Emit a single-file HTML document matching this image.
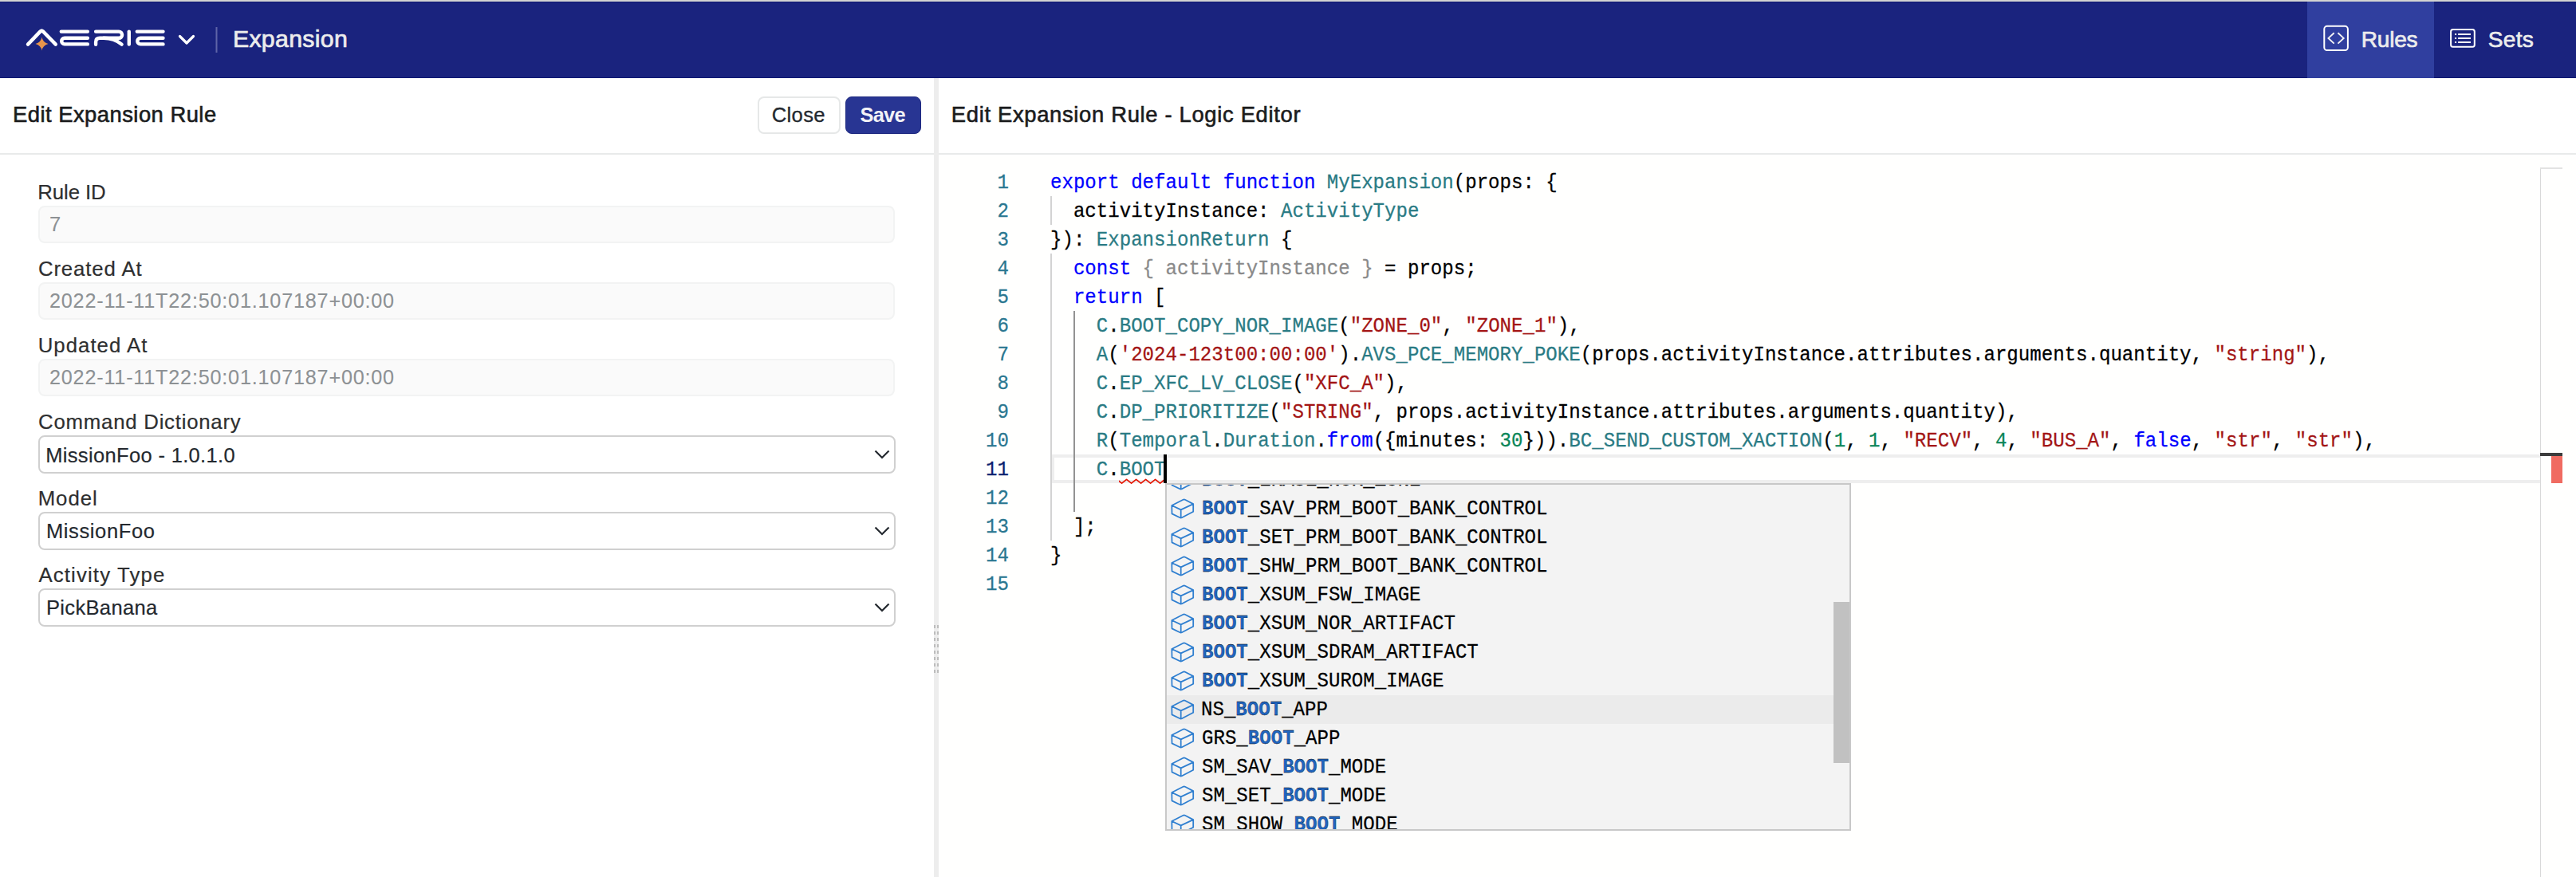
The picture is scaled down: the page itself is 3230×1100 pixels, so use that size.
<!DOCTYPE html>
<html><head><meta charset="utf-8">
<style>
*{box-sizing:border-box;margin:0;padding:0}
html,body{width:3230px;height:1100px;overflow:hidden;background:#fff;position:relative;font-family:"Liberation Sans",sans-serif}
.a{position:absolute}
.t{position:absolute;white-space:pre;line-height:1}
.mono{position:absolute;font-family:"Liberation Mono",monospace;font-size:24.08px;white-space:pre}
</style></head><body>

<div class="a" style="left:0;top:0;width:3230px;height:2px;background:#d3d4d2"></div>
<div class="a" style="left:0;top:2px;width:3230px;height:96px;background:#1a237e"></div>
<div class="a" style="left:0;top:2px;width:3230px;height:1px;background:#0f1872"></div>
<div class="a" style="left:0;top:97px;width:3230px;height:1px;background:#0f1872"></div>
<div class="a" style="left:2893px;top:2px;width:159px;height:96px;background:#303f9f"></div>
<svg class="a" style="left:0;top:0" width="300" height="98" viewBox="0 0 300 98">
  <g fill="none" stroke="#fff" stroke-width="4.4" stroke-linecap="round" stroke-linejoin="round">
    <path d="M35 55.6 L50.6 39.4 Q52.3 37.7 54 39.4 L69.8 55.6"/>
    <path d="M76.8 39.6 H109.9 M109.9 47.8 H81 A3.8 3.8 0 0 0 81 55.4 H109.9"/>
    <path d="M120.1 39.6 H149 A4.1 4.1 0 0 1 149 47.8 H125 Q120.1 47.8 120.1 52.7 V55.8"/>
    <path d="M130 47.8 Q143 47.8 152.6 55.6"/>
    <path d="M161.8 39.6 V55.6"/>
    <path d="M171.8 39.6 H204.5 M204.5 47.8 H176.1 A3.8 3.8 0 0 0 176.1 55.4 H204.5"/>
  </g>
  <path fill="#e8954b" d="M52.5 46.5 Q53.5 53 60.5 55 Q53.5 57 52.5 63.5 Q51.5 57 44.5 55 Q51.5 53 52.5 46.5Z"/>
  <path d="M225.5 45.5 L234 54 L242.5 45.5" fill="none" stroke="#fff" stroke-width="3.2" stroke-linecap="round" stroke-linejoin="round"/>
  <rect x="270.5" y="34" width="2" height="32" fill="#5e64a8"/>
</svg>
<div class="t" style="left:291.9px;top:34.0px;font-size:30.3px;font-weight:400;letter-spacing:0.31px;color:#ececec;-webkit-text-stroke:0.7px #ececec;">Expansion</div>
<svg class="a" style="left:2900px;top:20px" width="60" height="60" viewBox="0 0 60 60">
  <rect x="14.3" y="12.8" width="29.6" height="30.25" rx="3.6" fill="none" stroke="#fff" stroke-width="2"/>
  <path d="M26.7 21.2 L19.5 27.9 L26.7 34.6 M31.5 21.2 L38.7 27.9 L31.5 34.6" fill="none" stroke="#f4f4f4" stroke-width="1.9"/>
</svg>
<div class="t" style="left:2960.8px;top:36.0px;font-size:28.1px;font-weight:400;letter-spacing:-0.26px;color:#ececec;-webkit-text-stroke:0.7px #ececec;">Rules</div>
<svg class="a" style="left:3060px;top:20px" width="60" height="60" viewBox="0 0 60 60">
  <rect x="13.1" y="17.1" width="29.7" height="21.7" rx="2.6" fill="none" stroke="#fff" stroke-width="2"/>
  <path d="M22.1 23 H38 M22.1 28 H38 M22.1 32.9 H38" fill="none" stroke="#f6f6f6" stroke-width="2"/>
  <path d="M18 22 h2.1 v2.1 h-2.1Z M18 27 h2.1 v2.1 h-2.1Z M18 31.9 h2.1 v2.1 h-2.1Z" fill="#eee"/>
</svg>
<div class="t" style="left:3119.7px;top:36.3px;font-size:28.1px;font-weight:400;letter-spacing:0.33px;color:#ececec;-webkit-text-stroke:0.7px #ececec;">Sets</div>
<div class="t" style="left:16.0px;top:130.4px;font-size:27.4px;font-weight:400;letter-spacing:0.47px;color:#1b1c1d;-webkit-text-stroke:0.6px #1b1c1d;">Edit Expansion Rule</div>
<div class="a" style="left:950px;top:121px;width:104px;height:47px;border:2px solid #e6e8e8;border-radius:8px;background:#fff"></div>
<div class="t" style="left:967.7px;top:132.0px;font-size:25.6px;font-weight:400;letter-spacing:0.35px;color:#24292f;-webkit-text-stroke:0.35px #24292f;">Close</div>
<div class="a" style="left:1060px;top:121px;width:95px;height:47px;border-radius:8px;background:#283593;border:1px solid #1f2a80"></div>
<div class="t" style="left:1078.4px;top:132.2px;font-size:25.4px;font-weight:700;letter-spacing:-0.7px;color:#f2f2f6;">Save</div>
<div class="a" style="left:0;top:192px;width:3230px;height:2px;background:#e8eaea"></div>
<div class="t" style="left:47.3px;top:229.3px;font-size:25.8px;font-weight:400;letter-spacing:-0.12px;color:#2e2f30;-webkit-text-stroke:0.2px #2e2f30;">Rule ID</div>
<div class="a" style="left:48px;top:258px;width:1074px;height:47px;border:2px solid #f2f3f3;background:#fafafa;border-radius:8px"></div>
<div class="t" style="left:62.0px;top:269.1px;font-size:25.6px;font-weight:400;letter-spacing:0px;color:#8d9194;-webkit-text-stroke:0.1px #8d9194;">7</div>
<div class="t" style="left:47.9px;top:325.3px;font-size:25.8px;font-weight:400;letter-spacing:0.88px;color:#2e2f30;-webkit-text-stroke:0.2px #2e2f30;">Created At</div>
<div class="a" style="left:48px;top:354px;width:1074px;height:47px;border:2px solid #f2f3f3;background:#fafafa;border-radius:8px"></div>
<div class="t" style="left:62.0px;top:364.7px;font-size:25.2px;font-weight:400;letter-spacing:0.8px;color:#8d9194;-webkit-text-stroke:0.1px #8d9194;">2022-11-11T22:50:01.107187+00:00</div>
<div class="t" style="left:47.7px;top:421.3px;font-size:25.8px;font-weight:400;letter-spacing:1.01px;color:#2e2f30;-webkit-text-stroke:0.2px #2e2f30;">Updated At</div>
<div class="a" style="left:48px;top:450px;width:1074px;height:47px;border:2px solid #f2f3f3;background:#fafafa;border-radius:8px"></div>
<div class="t" style="left:62.0px;top:460.7px;font-size:25.2px;font-weight:400;letter-spacing:0.8px;color:#8d9194;-webkit-text-stroke:0.1px #8d9194;">2022-11-11T22:50:01.107187+00:00</div>
<div class="t" style="left:48.1px;top:517.2px;font-size:25.8px;font-weight:400;letter-spacing:0.75px;color:#2e2f30;-webkit-text-stroke:0.2px #2e2f30;">Command Dictionary</div>
<div class="a" style="left:48px;top:546px;width:1075px;height:48px;border:2px solid #d0d0d0;background:#fff;border-radius:8px"></div>
<div class="t" style="left:57.2px;top:558.5px;font-size:25.5px;font-weight:400;letter-spacing:0.34px;color:#24292f;-webkit-text-stroke:0.2px #24292f;">MissionFoo - 1.0.1.0</div>
<svg class="a" style="left:1090px;top:556px" width="32" height="28"><path d="M7.5 9.5 L16 18 L24.5 9.5" fill="none" stroke="#24292f" stroke-width="2.2"/></svg>
<div class="t" style="left:47.7px;top:613.3px;font-size:25.8px;font-weight:400;letter-spacing:0.93px;color:#2e2f30;-webkit-text-stroke:0.2px #2e2f30;">Model</div>
<div class="a" style="left:48px;top:642px;width:1075px;height:48px;border:2px solid #d0d0d0;background:#fff;border-radius:8px"></div>
<div class="t" style="left:57.9px;top:654.4px;font-size:25.5px;font-weight:400;letter-spacing:0.63px;color:#24292f;-webkit-text-stroke:0.2px #24292f;">MissionFoo</div>
<svg class="a" style="left:1090px;top:652px" width="32" height="28"><path d="M7.5 9.5 L16 18 L24.5 9.5" fill="none" stroke="#24292f" stroke-width="2.2"/></svg>
<div class="t" style="left:48.4px;top:709.3px;font-size:25.8px;font-weight:400;letter-spacing:1.14px;color:#2e2f30;-webkit-text-stroke:0.2px #2e2f30;">Activity Type</div>
<div class="a" style="left:48px;top:738px;width:1075px;height:48px;border:2px solid #d0d0d0;background:#fff;border-radius:8px"></div>
<div class="t" style="left:57.9px;top:750.4px;font-size:25.5px;font-weight:400;letter-spacing:0.36px;color:#24292f;-webkit-text-stroke:0.2px #24292f;">PickBanana</div>
<svg class="a" style="left:1090px;top:748px" width="32" height="28"><path d="M7.5 9.5 L16 18 L24.5 9.5" fill="none" stroke="#24292f" stroke-width="2.2"/></svg>
<div class="a" style="left:1171px;top:98px;width:6px;height:1002px;background:#ededed"></div>
<svg class="a" style="left:1171px;top:784px" width="6" height="62" fill="#bdbdbd"><rect x="0" y="0" width="2" height="4"/><rect x="4" y="0" width="2" height="4"/><rect x="0" y="8" width="2" height="4"/><rect x="4" y="8" width="2" height="4"/><rect x="0" y="16" width="2" height="4"/><rect x="4" y="16" width="2" height="4"/><rect x="0" y="24" width="2" height="4"/><rect x="4" y="24" width="2" height="4"/><rect x="0" y="32" width="2" height="4"/><rect x="4" y="32" width="2" height="4"/><rect x="0" y="40" width="2" height="4"/><rect x="4" y="40" width="2" height="4"/><rect x="0" y="48" width="2" height="4"/><rect x="4" y="48" width="2" height="4"/><rect x="0" y="56" width="2" height="4"/><rect x="4" y="56" width="2" height="4"/></svg>
<div class="a" style="left:1177px;top:194px;width:2053px;height:906px;background:#fffffe"></div>
<div class="a" style="left:1177px;top:98px;width:2053px;height:94px;background:#fff"></div>
<div class="t" style="left:1192.8px;top:130.4px;font-size:27.4px;font-weight:400;letter-spacing:0.67px;color:#1b1c1d;-webkit-text-stroke:0.6px #1b1c1d;">Edit Expansion Rule - Logic Editor</div>
<div class="a" style="left:1318px;top:570px;width:1867px;height:36px;border:4px solid #eeeeee;border-right:none"></div>
<div class="a" style="left:1317.0px;top:246px;width:2px;height:36px;background:#d3d3d3"></div>
<div class="a" style="left:1317.0px;top:318px;width:2px;height:360px;background:#d3d3d3"></div>
<div class="a" style="left:1345.9px;top:390px;width:2px;height:252px;background:#939393"></div>
<div class="a mono" style="left:1193px;top:212px;width:72px;text-align:right;line-height:36px;color:#2a7791;transform:scaleY(1.08);transform-origin:0 26px;-webkit-text-stroke:0.25px #2a7791">1</div>
<div class="a mono" style="left:1193px;top:248px;width:72px;text-align:right;line-height:36px;color:#2a7791;transform:scaleY(1.08);transform-origin:0 26px;-webkit-text-stroke:0.25px #2a7791">2</div>
<div class="a mono" style="left:1193px;top:284px;width:72px;text-align:right;line-height:36px;color:#2a7791;transform:scaleY(1.08);transform-origin:0 26px;-webkit-text-stroke:0.25px #2a7791">3</div>
<div class="a mono" style="left:1193px;top:320px;width:72px;text-align:right;line-height:36px;color:#2a7791;transform:scaleY(1.08);transform-origin:0 26px;-webkit-text-stroke:0.25px #2a7791">4</div>
<div class="a mono" style="left:1193px;top:356px;width:72px;text-align:right;line-height:36px;color:#2a7791;transform:scaleY(1.08);transform-origin:0 26px;-webkit-text-stroke:0.25px #2a7791">5</div>
<div class="a mono" style="left:1193px;top:392px;width:72px;text-align:right;line-height:36px;color:#2a7791;transform:scaleY(1.08);transform-origin:0 26px;-webkit-text-stroke:0.25px #2a7791">6</div>
<div class="a mono" style="left:1193px;top:428px;width:72px;text-align:right;line-height:36px;color:#2a7791;transform:scaleY(1.08);transform-origin:0 26px;-webkit-text-stroke:0.25px #2a7791">7</div>
<div class="a mono" style="left:1193px;top:464px;width:72px;text-align:right;line-height:36px;color:#2a7791;transform:scaleY(1.08);transform-origin:0 26px;-webkit-text-stroke:0.25px #2a7791">8</div>
<div class="a mono" style="left:1193px;top:500px;width:72px;text-align:right;line-height:36px;color:#2a7791;transform:scaleY(1.08);transform-origin:0 26px;-webkit-text-stroke:0.25px #2a7791">9</div>
<div class="a mono" style="left:1193px;top:536px;width:72px;text-align:right;line-height:36px;color:#2a7791;transform:scaleY(1.08);transform-origin:0 26px;-webkit-text-stroke:0.25px #2a7791">10</div>
<div class="a mono" style="left:1193px;top:572px;width:72px;text-align:right;line-height:36px;color:#0b216f;transform:scaleY(1.08);transform-origin:0 26px;-webkit-text-stroke:0.25px #0b216f">11</div>
<div class="a mono" style="left:1193px;top:608px;width:72px;text-align:right;line-height:36px;color:#2a7791;transform:scaleY(1.08);transform-origin:0 26px;-webkit-text-stroke:0.25px #2a7791">12</div>
<div class="a mono" style="left:1193px;top:644px;width:72px;text-align:right;line-height:36px;color:#2a7791;transform:scaleY(1.08);transform-origin:0 26px;-webkit-text-stroke:0.25px #2a7791">13</div>
<div class="a mono" style="left:1193px;top:680px;width:72px;text-align:right;line-height:36px;color:#2a7791;transform:scaleY(1.08);transform-origin:0 26px;-webkit-text-stroke:0.25px #2a7791">14</div>
<div class="a mono" style="left:1193px;top:716px;width:72px;text-align:right;line-height:36px;color:#2a7791;transform:scaleY(1.08);transform-origin:0 26px;-webkit-text-stroke:0.25px #2a7791">15</div>
<div class="a mono" style="left:1317px;top:212px;line-height:36px;transform:scaleY(1.08);transform-origin:0 26px;-webkit-text-stroke:0.25px currentColor"><span style="color:#0000ff">export default function </span><span style="color:#2a7b84">MyExpansion</span><span style="color:#000000">(props: {</span></div>
<div class="a mono" style="left:1317px;top:248px;line-height:36px;transform:scaleY(1.08);transform-origin:0 26px;-webkit-text-stroke:0.25px currentColor"><span style="color:#000000">  activityInstance: </span><span style="color:#2a7b84">ActivityType</span></div>
<div class="a mono" style="left:1317px;top:284px;line-height:36px;transform:scaleY(1.08);transform-origin:0 26px;-webkit-text-stroke:0.25px currentColor"><span style="color:#000000">}): </span><span style="color:#2a7b84">ExpansionReturn</span><span style="color:#000000"> {</span></div>
<div class="a mono" style="left:1317px;top:320px;line-height:36px;transform:scaleY(1.08);transform-origin:0 26px;-webkit-text-stroke:0.25px currentColor"><span style="color:#000000">  </span><span style="color:#0000ff">const</span><span style="color:#8a8a8a"> { activityInstance }</span><span style="color:#000000"> = props;</span></div>
<div class="a mono" style="left:1317px;top:356px;line-height:36px;transform:scaleY(1.08);transform-origin:0 26px;-webkit-text-stroke:0.25px currentColor"><span style="color:#000000">  </span><span style="color:#0000ff">return</span><span style="color:#000000"> [</span></div>
<div class="a mono" style="left:1317px;top:392px;line-height:36px;transform:scaleY(1.08);transform-origin:0 26px;-webkit-text-stroke:0.25px currentColor"><span style="color:#000000">    </span><span style="color:#2a7b84">C</span><span style="color:#000000">.</span><span style="color:#2a7b84">BOOT_COPY_NOR_IMAGE</span><span style="color:#000000">(</span><span style="color:#a31515">&quot;ZONE_0&quot;</span><span style="color:#000000">, </span><span style="color:#a31515">&quot;ZONE_1&quot;</span><span style="color:#000000">),</span></div>
<div class="a mono" style="left:1317px;top:428px;line-height:36px;transform:scaleY(1.08);transform-origin:0 26px;-webkit-text-stroke:0.25px currentColor"><span style="color:#000000">    </span><span style="color:#2a7b84">A</span><span style="color:#000000">(</span><span style="color:#a31515">&#x27;2024-123t00:00:00&#x27;</span><span style="color:#000000">).</span><span style="color:#2a7b84">AVS_PCE_MEMORY_POKE</span><span style="color:#000000">(props.activityInstance.attributes.arguments.quantity, </span><span style="color:#a31515">&quot;string&quot;</span><span style="color:#000000">),</span></div>
<div class="a mono" style="left:1317px;top:464px;line-height:36px;transform:scaleY(1.08);transform-origin:0 26px;-webkit-text-stroke:0.25px currentColor"><span style="color:#000000">    </span><span style="color:#2a7b84">C</span><span style="color:#000000">.</span><span style="color:#2a7b84">EP_XFC_LV_CLOSE</span><span style="color:#000000">(</span><span style="color:#a31515">&quot;XFC_A&quot;</span><span style="color:#000000">),</span></div>
<div class="a mono" style="left:1317px;top:500px;line-height:36px;transform:scaleY(1.08);transform-origin:0 26px;-webkit-text-stroke:0.25px currentColor"><span style="color:#000000">    </span><span style="color:#2a7b84">C</span><span style="color:#000000">.</span><span style="color:#2a7b84">DP_PRIORITIZE</span><span style="color:#000000">(</span><span style="color:#a31515">&quot;STRING&quot;</span><span style="color:#000000">, props.activityInstance.attributes.arguments.quantity),</span></div>
<div class="a mono" style="left:1317px;top:536px;line-height:36px;transform:scaleY(1.08);transform-origin:0 26px;-webkit-text-stroke:0.25px currentColor"><span style="color:#000000">    </span><span style="color:#2a7b84">R</span><span style="color:#000000">(</span><span style="color:#2a7b84">Temporal</span><span style="color:#000000">.</span><span style="color:#2a7b84">Duration</span><span style="color:#000000">.</span><span style="color:#0000ff">from</span><span style="color:#000000">({minutes: </span><span style="color:#098658">30</span><span style="color:#000000">})).</span><span style="color:#2a7b84">BC_SEND_CUSTOM_XACTION</span><span style="color:#000000">(</span><span style="color:#098658">1</span><span style="color:#000000">, </span><span style="color:#098658">1</span><span style="color:#000000">, </span><span style="color:#a31515">&quot;RECV&quot;</span><span style="color:#000000">, </span><span style="color:#098658">4</span><span style="color:#000000">, </span><span style="color:#a31515">&quot;BUS_A&quot;</span><span style="color:#000000">, </span><span style="color:#0000ff">false</span><span style="color:#000000">, </span><span style="color:#a31515">&quot;str&quot;</span><span style="color:#000000">, </span><span style="color:#a31515">&quot;str&quot;</span><span style="color:#000000">),</span></div>
<div class="a mono" style="left:1317px;top:572px;line-height:36px;transform:scaleY(1.08);transform-origin:0 26px;-webkit-text-stroke:0.25px currentColor"><span style="color:#000000">    </span><span style="color:#2a7b84">C</span><span style="color:#000000">.</span><span style="color:#2a7b84">BOOT</span></div>
<div class="a mono" style="left:1317px;top:608px;line-height:36px;transform:scaleY(1.08);transform-origin:0 26px;-webkit-text-stroke:0.25px currentColor"><span style="color:#000000"></span></div>
<div class="a mono" style="left:1317px;top:644px;line-height:36px;transform:scaleY(1.08);transform-origin:0 26px;-webkit-text-stroke:0.25px currentColor"><span style="color:#000000">  ];</span></div>
<div class="a mono" style="left:1317px;top:680px;line-height:36px;transform:scaleY(1.08);transform-origin:0 26px;-webkit-text-stroke:0.25px currentColor"><span style="color:#000000">}</span></div>
<div class="a mono" style="left:1317px;top:716px;line-height:36px;transform:scaleY(1.08);transform-origin:0 26px;-webkit-text-stroke:0.25px currentColor"><span style="color:#000000"></span></div>
<div class="a" style="left:1403px;top:596px;width:56px;height:12px;overflow:hidden"><svg class="a" style="left:-3.4px;top:0.7px" width="70" height="12"><path d="M0.6 4.4 L6.6 9.2 L12.6 4.4 L18.6 9.2 L24.6 4.4 L30.6 9.2 L36.6 4.4 L42.6 9.2 L48.6 4.4 L54.6 9.2 L60.6 4.4" fill="none" stroke="#e51400" stroke-width="1.7" stroke-linejoin="round"/></svg></div>
<div class="a" style="left:1458.5px;top:570px;width:4px;height:36px;background:#000"></div>
<div class="a" style="left:3185px;top:210px;width:1px;height:890px;background:#d9d9d9"></div>
<div class="a" style="left:3185px;top:210px;width:28px;height:2px;background:#e3e3e3"></div>
<div class="a" style="left:3185px;top:568px;width:28px;height:4px;background:#3c3c3c"></div>
<div class="a" style="left:3199px;top:572px;width:14px;height:34px;background:#f06b61"></div>
<div class="a" style="left:1461px;top:606px;width:860px;height:436px;background:#f3f3f3;border:2px solid #c8c8c8;overflow:hidden"><div class="a" style="left:0;top:-24px;width:856px;height:36px;"><svg class="a" style="left:4px;top:2px" width="32" height="30" viewBox="0 0 32 30"><path d="M2.3 12 L16.5 4.8 Q17.7 4.2 18.9 4.8 L29.2 10.1 V19.7 L14.9 27.3 Q13.7 27.9 12.5 27.3 L2.5 22.4 Z M2.3 12 L13.7 17.4 L29.2 10.1 M13.7 17.4 V27.9" fill="none" stroke="#2f7fd0" stroke-width="1.75" stroke-linejoin="round"/></svg><div class="a mono" style="left:44px;top:1px;line-height:36px;color:#000;transform:scaleY(1.08);transform-origin:0 26px;-webkit-text-stroke:0.25px #000"><b style="color:#1f65c0">BOOT</b>_ERASE_NOR_ZONE</div></div><div class="a" style="left:0;top:12px;width:856px;height:36px;"><svg class="a" style="left:4px;top:2px" width="32" height="30" viewBox="0 0 32 30"><path d="M2.3 12 L16.5 4.8 Q17.7 4.2 18.9 4.8 L29.2 10.1 V19.7 L14.9 27.3 Q13.7 27.9 12.5 27.3 L2.5 22.4 Z M2.3 12 L13.7 17.4 L29.2 10.1 M13.7 17.4 V27.9" fill="none" stroke="#2f7fd0" stroke-width="1.75" stroke-linejoin="round"/></svg><div class="a mono" style="left:44px;top:1px;line-height:36px;color:#000;transform:scaleY(1.08);transform-origin:0 26px;-webkit-text-stroke:0.25px #000"><b style="color:#1f65c0">BOOT</b>_SAV_PRM_BOOT_BANK_CONTROL</div></div><div class="a" style="left:0;top:48px;width:856px;height:36px;"><svg class="a" style="left:4px;top:2px" width="32" height="30" viewBox="0 0 32 30"><path d="M2.3 12 L16.5 4.8 Q17.7 4.2 18.9 4.8 L29.2 10.1 V19.7 L14.9 27.3 Q13.7 27.9 12.5 27.3 L2.5 22.4 Z M2.3 12 L13.7 17.4 L29.2 10.1 M13.7 17.4 V27.9" fill="none" stroke="#2f7fd0" stroke-width="1.75" stroke-linejoin="round"/></svg><div class="a mono" style="left:44px;top:1px;line-height:36px;color:#000;transform:scaleY(1.08);transform-origin:0 26px;-webkit-text-stroke:0.25px #000"><b style="color:#1f65c0">BOOT</b>_SET_PRM_BOOT_BANK_CONTROL</div></div><div class="a" style="left:0;top:84px;width:856px;height:36px;"><svg class="a" style="left:4px;top:2px" width="32" height="30" viewBox="0 0 32 30"><path d="M2.3 12 L16.5 4.8 Q17.7 4.2 18.9 4.8 L29.2 10.1 V19.7 L14.9 27.3 Q13.7 27.9 12.5 27.3 L2.5 22.4 Z M2.3 12 L13.7 17.4 L29.2 10.1 M13.7 17.4 V27.9" fill="none" stroke="#2f7fd0" stroke-width="1.75" stroke-linejoin="round"/></svg><div class="a mono" style="left:44px;top:1px;line-height:36px;color:#000;transform:scaleY(1.08);transform-origin:0 26px;-webkit-text-stroke:0.25px #000"><b style="color:#1f65c0">BOOT</b>_SHW_PRM_BOOT_BANK_CONTROL</div></div><div class="a" style="left:0;top:120px;width:856px;height:36px;"><svg class="a" style="left:4px;top:2px" width="32" height="30" viewBox="0 0 32 30"><path d="M2.3 12 L16.5 4.8 Q17.7 4.2 18.9 4.8 L29.2 10.1 V19.7 L14.9 27.3 Q13.7 27.9 12.5 27.3 L2.5 22.4 Z M2.3 12 L13.7 17.4 L29.2 10.1 M13.7 17.4 V27.9" fill="none" stroke="#2f7fd0" stroke-width="1.75" stroke-linejoin="round"/></svg><div class="a mono" style="left:44px;top:1px;line-height:36px;color:#000;transform:scaleY(1.08);transform-origin:0 26px;-webkit-text-stroke:0.25px #000"><b style="color:#1f65c0">BOOT</b>_XSUM_FSW_IMAGE</div></div><div class="a" style="left:0;top:156px;width:856px;height:36px;"><svg class="a" style="left:4px;top:2px" width="32" height="30" viewBox="0 0 32 30"><path d="M2.3 12 L16.5 4.8 Q17.7 4.2 18.9 4.8 L29.2 10.1 V19.7 L14.9 27.3 Q13.7 27.9 12.5 27.3 L2.5 22.4 Z M2.3 12 L13.7 17.4 L29.2 10.1 M13.7 17.4 V27.9" fill="none" stroke="#2f7fd0" stroke-width="1.75" stroke-linejoin="round"/></svg><div class="a mono" style="left:44px;top:1px;line-height:36px;color:#000;transform:scaleY(1.08);transform-origin:0 26px;-webkit-text-stroke:0.25px #000"><b style="color:#1f65c0">BOOT</b>_XSUM_NOR_ARTIFACT</div></div><div class="a" style="left:0;top:192px;width:856px;height:36px;"><svg class="a" style="left:4px;top:2px" width="32" height="30" viewBox="0 0 32 30"><path d="M2.3 12 L16.5 4.8 Q17.7 4.2 18.9 4.8 L29.2 10.1 V19.7 L14.9 27.3 Q13.7 27.9 12.5 27.3 L2.5 22.4 Z M2.3 12 L13.7 17.4 L29.2 10.1 M13.7 17.4 V27.9" fill="none" stroke="#2f7fd0" stroke-width="1.75" stroke-linejoin="round"/></svg><div class="a mono" style="left:44px;top:1px;line-height:36px;color:#000;transform:scaleY(1.08);transform-origin:0 26px;-webkit-text-stroke:0.25px #000"><b style="color:#1f65c0">BOOT</b>_XSUM_SDRAM_ARTIFACT</div></div><div class="a" style="left:0;top:228px;width:856px;height:36px;"><svg class="a" style="left:4px;top:2px" width="32" height="30" viewBox="0 0 32 30"><path d="M2.3 12 L16.5 4.8 Q17.7 4.2 18.9 4.8 L29.2 10.1 V19.7 L14.9 27.3 Q13.7 27.9 12.5 27.3 L2.5 22.4 Z M2.3 12 L13.7 17.4 L29.2 10.1 M13.7 17.4 V27.9" fill="none" stroke="#2f7fd0" stroke-width="1.75" stroke-linejoin="round"/></svg><div class="a mono" style="left:44px;top:1px;line-height:36px;color:#000;transform:scaleY(1.08);transform-origin:0 26px;-webkit-text-stroke:0.25px #000"><b style="color:#1f65c0">BOOT</b>_XSUM_SUROM_IMAGE</div></div><div class="a" style="left:0;top:264px;width:856px;height:36px;background:#ebebeb;"><svg class="a" style="left:4px;top:2px" width="32" height="30" viewBox="0 0 32 30"><path d="M2.3 12 L16.5 4.8 Q17.7 4.2 18.9 4.8 L29.2 10.1 V19.7 L14.9 27.3 Q13.7 27.9 12.5 27.3 L2.5 22.4 Z M2.3 12 L13.7 17.4 L29.2 10.1 M13.7 17.4 V27.9" fill="none" stroke="#2f7fd0" stroke-width="1.75" stroke-linejoin="round"/></svg><div class="a mono" style="left:43px;top:1px;line-height:36px;color:#000;transform:scaleY(1.08);transform-origin:0 26px;-webkit-text-stroke:0.25px #000">NS_<b style="color:#1f65c0">BOOT</b>_APP</div></div><div class="a" style="left:0;top:300px;width:856px;height:36px;"><svg class="a" style="left:4px;top:2px" width="32" height="30" viewBox="0 0 32 30"><path d="M2.3 12 L16.5 4.8 Q17.7 4.2 18.9 4.8 L29.2 10.1 V19.7 L14.9 27.3 Q13.7 27.9 12.5 27.3 L2.5 22.4 Z M2.3 12 L13.7 17.4 L29.2 10.1 M13.7 17.4 V27.9" fill="none" stroke="#2f7fd0" stroke-width="1.75" stroke-linejoin="round"/></svg><div class="a mono" style="left:44px;top:1px;line-height:36px;color:#000;transform:scaleY(1.08);transform-origin:0 26px;-webkit-text-stroke:0.25px #000">GRS_<b style="color:#1f65c0">BOOT</b>_APP</div></div><div class="a" style="left:0;top:336px;width:856px;height:36px;"><svg class="a" style="left:4px;top:2px" width="32" height="30" viewBox="0 0 32 30"><path d="M2.3 12 L16.5 4.8 Q17.7 4.2 18.9 4.8 L29.2 10.1 V19.7 L14.9 27.3 Q13.7 27.9 12.5 27.3 L2.5 22.4 Z M2.3 12 L13.7 17.4 L29.2 10.1 M13.7 17.4 V27.9" fill="none" stroke="#2f7fd0" stroke-width="1.75" stroke-linejoin="round"/></svg><div class="a mono" style="left:44px;top:1px;line-height:36px;color:#000;transform:scaleY(1.08);transform-origin:0 26px;-webkit-text-stroke:0.25px #000">SM_SAV_<b style="color:#1f65c0">BOOT</b>_MODE</div></div><div class="a" style="left:0;top:372px;width:856px;height:36px;"><svg class="a" style="left:4px;top:2px" width="32" height="30" viewBox="0 0 32 30"><path d="M2.3 12 L16.5 4.8 Q17.7 4.2 18.9 4.8 L29.2 10.1 V19.7 L14.9 27.3 Q13.7 27.9 12.5 27.3 L2.5 22.4 Z M2.3 12 L13.7 17.4 L29.2 10.1 M13.7 17.4 V27.9" fill="none" stroke="#2f7fd0" stroke-width="1.75" stroke-linejoin="round"/></svg><div class="a mono" style="left:44px;top:1px;line-height:36px;color:#000;transform:scaleY(1.08);transform-origin:0 26px;-webkit-text-stroke:0.25px #000">SM_SET_<b style="color:#1f65c0">BOOT</b>_MODE</div></div><div class="a" style="left:0;top:408px;width:856px;height:36px;"><svg class="a" style="left:4px;top:2px" width="32" height="30" viewBox="0 0 32 30"><path d="M2.3 12 L16.5 4.8 Q17.7 4.2 18.9 4.8 L29.2 10.1 V19.7 L14.9 27.3 Q13.7 27.9 12.5 27.3 L2.5 22.4 Z M2.3 12 L13.7 17.4 L29.2 10.1 M13.7 17.4 V27.9" fill="none" stroke="#2f7fd0" stroke-width="1.75" stroke-linejoin="round"/></svg><div class="a mono" style="left:44px;top:1px;line-height:36px;color:#000;transform:scaleY(1.08);transform-origin:0 26px;-webkit-text-stroke:0.25px #000">SM_SHOW_<b style="color:#1f65c0">BOOT</b>_MODE</div></div><div class="a" style="left:836px;top:147px;width:20px;height:202px;background:#c1c1c1"></div></div>
</body></html>
